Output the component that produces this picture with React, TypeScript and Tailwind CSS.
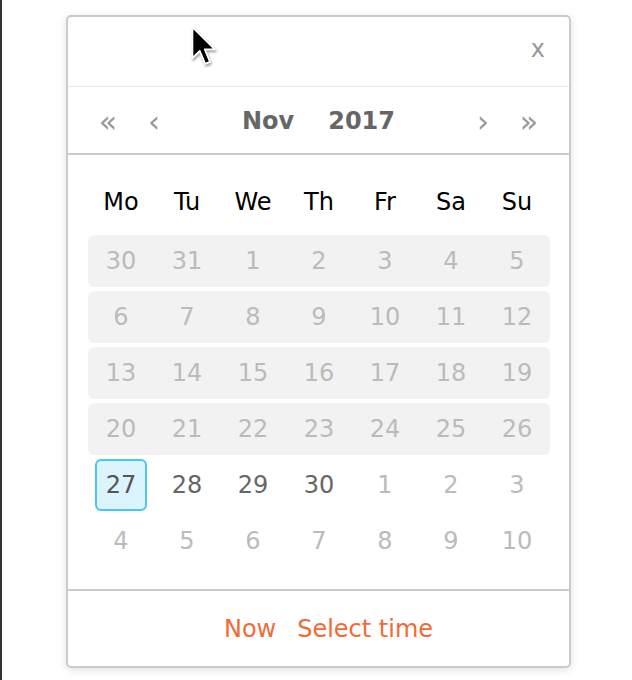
const WEEKDAYS = ['Mo', 'Tu', 'We', 'Th', 'Fr', 'Sa', 'Su'];

type Cell = { day: number; kind: 'dim' | 'cur' | 'sel' };

const dim = (days: number[]): Cell[] => days.map((day) => ({ day, kind: 'dim' as const }));

const WEEKS: { cells: Cell[]; shaded: boolean }[] = [
  { cells: dim([30, 31, 1, 2, 3, 4, 5]), shaded: true },
  { cells: dim([6, 7, 8, 9, 10, 11, 12]), shaded: true },
  { cells: dim([13, 14, 15, 16, 17, 18, 19]), shaded: true },
  { cells: dim([20, 21, 22, 23, 24, 25, 26]), shaded: true },
  {
    cells: [
      { day: 27, kind: 'sel' },
      { day: 28, kind: 'cur' },
      { day: 29, kind: 'cur' },
      { day: 30, kind: 'cur' },
      ...dim([1, 2, 3]),
    ],
    shaded: false,
  },
  { cells: dim([4, 5, 6, 7, 8, 9, 10]), shaded: false },
];

function Cursor() {
  return (
    <svg
      className="absolute left-[188px] top-[25px] drop-shadow-[1px_2px_1px_rgba(0,0,0,0.35)]"
      width="28"
      height="44"
      viewBox="0 0 14 22"
    >
      <path
        d="M1.2 1 L1.2 16.6 L4.9 13 L7.6 19.4 L10 18.4 L7.4 12.2 L12.4 12.2 Z"
        fill="#000"
        stroke="#fff"
        strokeWidth="0.9"
        strokeLinejoin="round"
      />
    </svg>
  );
}

export default function App() {
  return (
    <div className="relative h-[680px] w-full bg-white border-l-2 border-[#2b3338] pl-[64px] pt-[15px] font-['DejaVu_Sans',sans-serif]">
      <div className="w-[505px] bg-white border-2 border-[#cbcbcb] rounded-[5px] shadow-[0_2px_8px_rgba(0,0,0,0.12)]">
        {/* Header */}
        <div className="h-[69px] flex items-center justify-end pr-[24px] pb-[6px] text-[24px] text-[#999]">
          <span className="leading-none">x</span>
        </div>
        <div className="h-px bg-[#e8e8e8]" />

        {/* Month nav */}
        <div className="h-[66px] flex items-center px-[17px] text-[24px]">
          <span className="w-[46px] text-center text-[#999] text-[30px] pt-[3px]">«</span>
          <span className="w-[46px] text-center text-[#999] text-[30px] pt-[3px]">‹</span>
          <div className="flex-1 flex justify-center gap-[34px] font-bold text-[#666] pt-[2px]">
            <span>Nov</span>
            <span>2017</span>
          </div>
          <span className="w-[46px] text-center text-[#999] text-[30px] pt-[2px]">›</span>
          <span className="w-[46px] text-center text-[#999] text-[30px] pt-[2px]">»</span>
        </div>
        <div className="h-[2px] bg-[#cbcbcb]" />

        {/* Body */}
        <div className="pl-[20px] pr-[19px] pt-[21px] pb-[22px] text-[24px]">
          <div className="grid grid-cols-7 h-[52px] items-center text-center text-black">
            {WEEKDAYS.map((d) => (
              <span key={d}>{d}</span>
            ))}
          </div>
          <div className="mt-[7px] flex flex-col gap-[4px]">
            {WEEKS.map((week, wi) => (
              <div
                key={wi}
                className={`grid grid-cols-7 h-[52px] rounded-[6px] ${week.shaded ? 'bg-[#f2f2f2]' : ''}`}
              >
                {week.cells.map((c, ci) => (
                  <div key={ci} className="flex items-center justify-center">
                    {c.kind === 'sel' ? (
                      <span className="w-[52px] h-[52px] flex items-center justify-center rounded-[6px] border-2 border-[#48c6f4] bg-[#dcf4fe] text-[#555]">
                        {c.day}
                      </span>
                    ) : (
                      <span className={c.kind === 'cur' ? 'text-[#666]' : 'text-[#bbb]'}>{c.day}</span>
                    )}
                  </div>
                ))}
              </div>
            ))}
          </div>
        </div>
        <div className="h-[2px] bg-[#cbcbcb]" />

        {/* Footer */}
        <div className="h-[75px] flex items-center justify-center gap-[21px] pl-[20px] pt-[1px] text-[24px] text-[#f26a36]">
          <span>Now</span>
          <span>Select time</span>
        </div>
      </div>
      <Cursor />
    </div>
  );
}
